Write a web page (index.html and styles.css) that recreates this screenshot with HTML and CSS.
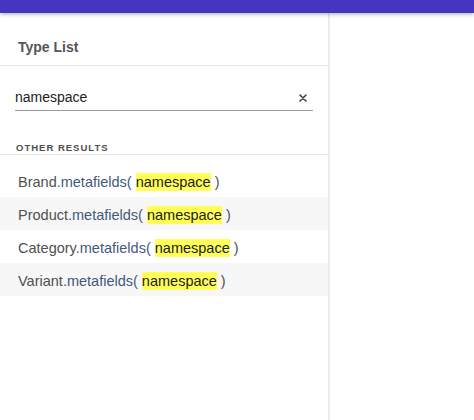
FILE: index.html
```html
<!DOCTYPE html>
<html>
<head>
<meta charset="utf-8">
<link rel="stylesheet" href="styles.css">
</head>
<body>
<div class="topbar"></div>
<div class="main">
  <aside class="sidebar">
    <div class="sidebar-header">Type List</div>
    <div class="search">
      <div class="search-field">
        <span class="search-text">namespace</span>
        <svg class="clear" width="8" height="8" viewBox="0 0 8 8"><path d="M1 1L7 7M7 1L1 7" stroke="#444" stroke-width="1.6" stroke-linecap="round"/></svg>
      </div>
    </div>
    <div class="results-label">OTHER RESULTS</div>
    <ul class="results">
      <li class="row"><span class="type">Brand</span><span class="field">.metafields( </span><span class="hl">namespace</span><span class="type"> )</span></li>
      <li class="row alt"><span class="type">Product</span><span class="field">.metafields( </span><span class="hl">namespace</span><span class="type"> )</span></li>
      <li class="row"><span class="type">Category</span><span class="field">.metafields( </span><span class="hl">namespace</span><span class="type"> )</span></li>
      <li class="row alt"><span class="type">Variant</span><span class="field">.metafields( </span><span class="hl">namespace</span><span class="type"> )</span></li>
    </ul>
  </aside>
  <section class="content"></section>
</div>
</body>
</html>
```
FILE: styles.css
```css
html, body {
  margin: 0;
  padding: 0;
  background: #fff;
  font-family: "Liberation Sans", Arial, sans-serif;
}
.topbar {
  height: 13px;
  background: #4535bf;
  box-shadow: 0 1px 4px rgba(0, 0, 0, 0.35);
  position: relative;
  z-index: 2;
}
.main {
  display: flex;
  min-height: calc(100vh - 13px);
}
.sidebar {
  width: 328px;
  border-right: 2px solid #ebebeb;
  box-sizing: content-box;
}
.content {
  flex: 1;
}
.sidebar-header {
  padding: 26px 18px 9px;
  font-size: 14px;
  line-height: 17px;
  font-weight: bold;
  color: #555;
  border-bottom: 1px solid #e6e6e6;
}
.search {
  padding: 19px 15px 0;
}
.search-field {
  display: flex;
  align-items: center;
  justify-content: space-between;
  padding: 4px 6px 4px 0;
  border-bottom: 1px solid #9c9c9c;
}
.search-text {
  font-size: 14px;
  line-height: 17px;
  color: #222;
}
.clear {
  display: block;
  margin-top: 1px;
}
.results-label {
  padding: 31px 16px 0;
  font-size: 9.5px;
  line-height: 12px;
  font-weight: bold;
  letter-spacing: 1px;
  color: #4f4f4f;
  border-bottom: 1px solid #e6e6e6;
}
.results {
  list-style: none;
  margin: 0;
  padding: 9px 0 0;
}
.row {
  box-sizing: border-box;
  height: 33px;
  padding: 3px 0 0 18px;
  line-height: 30px;
  font-size: 14.5px;
  white-space: nowrap;
}
.row.alt {
  background: #f7f7f7;
}
.type {
  color: #505050;
}
.field {
  color: #3f5a7c;
}
.hl {
  background: #ffff57;
  color: #1c1c1c;
  padding: 1px 0;
}
```
